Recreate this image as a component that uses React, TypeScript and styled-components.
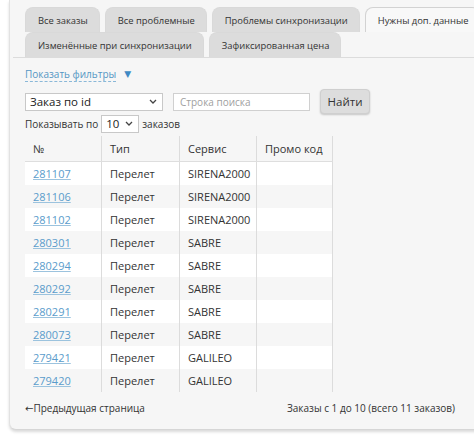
import React from 'react';
import styled, { createGlobalStyle } from 'styled-components';

const GlobalStyle = createGlobalStyle`
  html, body {
    margin: 0;
    padding: 0;
    background: #ffffff;
  }
  body {
    font-family: "Open Sans", "DejaVu Sans", sans-serif;
    font-size: 10px;
    color: #333;
  }
`;

interface Order {
  id: string;
  type: string;
  service: string;
  promo: string;
}

const orders: Order[] = [
  { id: '281107', type: 'Перелет', service: 'SIRENA2000', promo: '' },
  { id: '281106', type: 'Перелет', service: 'SIRENA2000', promo: '' },
  { id: '281102', type: 'Перелет', service: 'SIRENA2000', promo: '' },
  { id: '280301', type: 'Перелет', service: 'SABRE', promo: '' },
  { id: '280294', type: 'Перелет', service: 'SABRE', promo: '' },
  { id: '280292', type: 'Перелет', service: 'SABRE', promo: '' },
  { id: '280291', type: 'Перелет', service: 'SABRE', promo: '' },
  { id: '280073', type: 'Перелет', service: 'SABRE', promo: '' },
  { id: '279421', type: 'Перелет', service: 'GALILEO', promo: '' },
  { id: '279420', type: 'Перелет', service: 'GALILEO', promo: '' },
];

const tabRows = [
  ['Все заказы', 'Все проблемные', 'Проблемы синхронизации', 'Нужны доп. данные'],
  ['Изменённые при синхронизации', 'Зафиксированная цена'],
];
const activeTab = 'Нужны доп. данные';

// column widths in px (padding included)
const columns = [
  { title: '№', width: 76 },
  { title: 'Тип', width: 77 },
  { title: 'Сервис', width: 76 },
  { title: 'Промо код', width: 75 },
];

const Page = styled.div`
  width: 474px;
  height: 436px;
  overflow: hidden;
`;

const Panel = styled.div`
  margin-left: 9px;
  width: 480px;
  height: 430px;
  box-sizing: border-box;
  background: #f6f6f6;
  border-left: 1px solid #e2e2e2;
  border-bottom: 1px solid #d6d6d6;
  border-radius: 0 0 0 7px;
  box-shadow: 0 2px 3px rgba(0, 0, 0, 0.15);
  padding-top: 7px;
`;

const TabBar = styled.div`
  margin-left: 3px;
  padding-left: 12px;
  border-bottom: 1px solid #dcdcdc;
  display: flex;
  flex-direction: column;
`;

const TabRow = styled.div`
  display: flex;
  gap: 5px;
`;

const Tab = styled.div<{ $active?: boolean }>`
  height: 25px;
  box-sizing: border-box;
  padding: 0 11px 0 12px;
  display: flex;
  align-items: center;
  white-space: nowrap;
  font-size: 9.4px;
  border-radius: 8px 8px 0 0;
  border: 1px solid ${({ $active }) => ($active ? '#d2d2d2' : '#d9d9d9')};
  border-bottom: none;
  background: ${({ $active }) => ($active ? '#f8f8f8' : '#dcdcdc')};
  color: #333;
`;

const Body = styled.div`
  padding: 7px 0 0 15px;
`;

const FilterToggle = styled.div`
  display: flex;
  align-items: center;
  gap: 8px;
  height: 18px;
`;

const DashedLink = styled.span`
  color: #5597c4;
  border-bottom: 1px dashed #8ab8d8;
  line-height: 14px;
`;

const Triangle = styled.span`
  color: #3f8ac4;
  font-size: 9px;
  margin-top: -2px;
`;

const SearchRow = styled.div`
  margin-top: 6px;
  display: flex;
  align-items: center;
  height: 25px;
`;

const SelectBox = styled.div<{ $width: number }>`
  width: ${({ $width }) => $width}px;
  height: 18px;
  box-sizing: border-box;
  background: #fff;
  border: 1px solid #c8c8c8;
  display: flex;
  align-items: center;
  justify-content: space-between;
  padding: 0 5px 0 4px;
  color: #222;
  font-size: 11.5px;
`;

const Chevron = () => (
  <svg width="8" height="5" viewBox="0 0 8 5">
    <path d="M1 1 L4 4 L7 1" fill="none" stroke="#444" strokeWidth="1.3" />
  </svg>
);

const SearchInput = styled.div`
  margin-left: 10px;
  width: 137px;
  height: 18px;
  box-sizing: border-box;
  background: #fff;
  border: 1px solid #d0d0d0;
  padding: 0 6px;
  display: flex;
  align-items: center;
  color: #a0a0a0;
`;

const Button = styled.div`
  margin-left: 10px;
  width: 50px;
  height: 25px;
  box-sizing: border-box;
  display: flex;
  align-items: center;
  justify-content: center;
  background: #dddddd;
  border: 1px solid #cfcfcf;
  border-radius: 4px;
  box-shadow: 0 1px 2px rgba(0, 0, 0, 0.2);
  color: #333;
  font-size: 11.5px;
`;

const PerPageRow = styled.div`
  display: flex;
  align-items: center;
  gap: 3px;
  height: 17px;
  margin-top: 1px;
`;

const Table = styled.table`
  margin-top: 4px;
  border-collapse: collapse;
  table-layout: fixed;
  width: 304px;
  font-size: 11px;
`;

const Th = styled.th<{ $width: number }>`
  width: ${({ $width }) => $width - 16}px;
  height: 25px;
  padding: 0 8px;
  text-align: left;
  font-weight: normal;
  color: #333;
  border-bottom: 1px solid #dedede;
  border-right: 1px solid #dcdcdc;
  &:not(:first-child) {
    border-left: 1px solid #dcdcdc;
  }
`;

const Tr = styled.tr<{ $striped: boolean }>`
  background: ${({ $striped }) => ($striped ? 'transparent' : '#ffffff')};
`;

const Td = styled.td`
  height: 23px;
  padding: 0 8px;
  white-space: nowrap;
  border-right: 1px solid #dcdcdc;
  &:not(:first-child) {
    border-left: 1px solid #dcdcdc;
  }
`;

const OrderLink = styled.a`
  color: #5a9ccb;
  text-decoration: underline;
  text-decoration-color: #9cc3de;
`;

const Footer = styled.div`
  margin-top: 9px;
  padding-right: 34px;
  display: flex;
  justify-content: space-between;
  align-items: center;
  height: 14px;
`;

const App: React.FC = () => (
  <Page>
    <GlobalStyle />
    <Panel>
      <TabBar>
        {tabRows.map((row, i) => (
          <TabRow key={i}>
            {row.map((label) => (
              <Tab key={label} $active={label === activeTab}>
                {label}
              </Tab>
            ))}
          </TabRow>
        ))}
      </TabBar>
      <Body>
        <FilterToggle>
          <DashedLink>Показать фильтры</DashedLink>
          <Triangle>▼</Triangle>
        </FilterToggle>
        <SearchRow>
          <SelectBox $width={138}>
            Заказ по id
            <Chevron />
          </SelectBox>
          <SearchInput>Строка поиска</SearchInput>
          <Button>Найти</Button>
        </SearchRow>
        <PerPageRow>
          <span>Показывать по</span>
          <SelectBox $width={38}>
            10
            <Chevron />
          </SelectBox>
          <span>заказов</span>
        </PerPageRow>
        <Table>
          <thead>
            <tr>
              {columns.map((c) => (
                <Th key={c.title} $width={c.width}>
                  {c.title}
                </Th>
              ))}
            </tr>
          </thead>
          <tbody>
            {orders.map((o, i) => (
              <Tr key={o.id} $striped={i % 2 === 1}>
                <Td>
                  <OrderLink href="#">{o.id}</OrderLink>
                </Td>
                <Td>{o.type}</Td>
                <Td>{o.service}</Td>
                <Td>{o.promo}</Td>
              </Tr>
            ))}
          </tbody>
        </Table>
        <Footer>
          <span>←Предыдущая страница</span>
          <span>Заказы с 1 до 10 (всего 11 заказов)</span>
        </Footer>
      </Body>
    </Panel>
  </Page>
);

export default App;
